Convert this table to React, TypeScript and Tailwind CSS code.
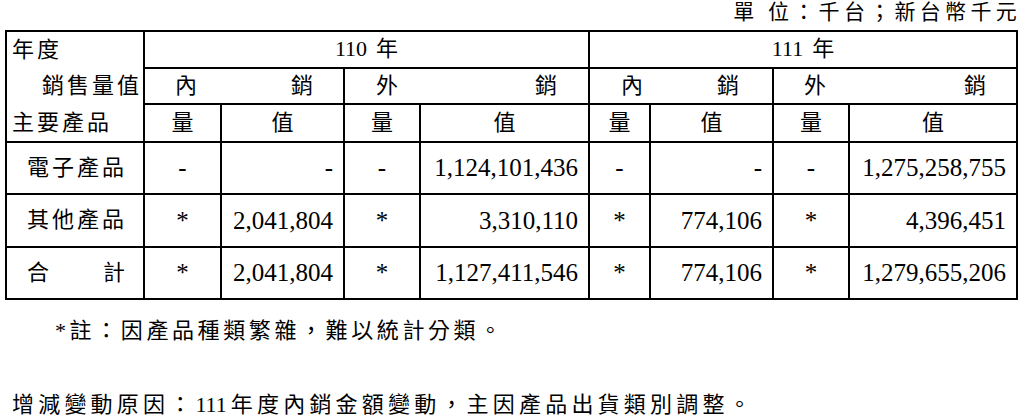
const serif = "font-['Liberation_Serif','Noto_Sans_CJK_TC',serif]";

const rows = [
  { name: "電子產品", v: ["-", "-", "-", "1,124,101,436", "-", "-", "-", "1,275,258,755"] },
  { name: "其他產品", v: ["*", "2,041,804", "*", "3,310,110", "*", "774,106", "*", "4,396,451"] },
  { name: "合計", v: ["*", "2,041,804", "*", "1,127,411,546", "*", "774,106", "*", "1,279,655,206"] },
];

const cell = "border-2 border-black p-0";

export default function App() {
  return (
    <div className={`w-[1024px] h-[420px] bg-white text-black flex flex-col ${serif}`}>
      <div className="h-[30px] flex items-center justify-end pr-[3px] pb-[4px] text-[21px] tracking-[4.3px] leading-none">
        單 位：千台；新台幣千元
      </div>

      <table className="ml-[5px] w-[1011px] table-fixed border-collapse border-2 border-black">
        <colgroup>
          <col className="w-[138px]" />
          <col className="w-[77px]" />
          <col className="w-[123px]" />
          <col className="w-[76px]" />
          <col className="w-[169px]" />
          <col className="w-[61px]" />
          <col className="w-[123px]" />
          <col className="w-[76px]" />
          <col className="w-[168px]" />
        </colgroup>
        <tbody className="text-[22px] leading-none">
          <tr className="h-[37px]">
            <td rowSpan={3} className={`${cell} align-top`}>
              <div className="flex flex-col tracking-[3px]">
                <div className="h-[36px] flex items-center pl-[5px]">年度</div>
                <div className="h-[37px] flex items-center justify-end pr-[1px]">銷售量值</div>
                <div className="h-[36px] flex items-center pl-[5px]">主要產品</div>
              </div>
            </td>
            <td colSpan={4} className={`${cell} text-center`}>
              110<span className="ml-[9px]">年</span>
            </td>
            <td colSpan={4} className={`${cell} text-center`}>
              111<span className="ml-[9px]">年</span>
            </td>
          </tr>
          <tr className="h-[36px]">
            <td colSpan={2} className={cell}>
              <div className="flex justify-between px-[30px]"><span>內</span><span>銷</span></div>
            </td>
            <td colSpan={2} className={cell}>
              <div className="flex justify-between px-[31px]"><span>外</span><span>銷</span></div>
            </td>
            <td colSpan={2} className={cell}>
              <div className="flex justify-between pl-[31px] pr-[33px]"><span>內</span><span>銷</span></div>
            </td>
            <td colSpan={2} className={cell}>
              <div className="flex justify-between px-[30px]"><span>外</span><span>銷</span></div>
            </td>
          </tr>
          <tr className="h-[37px]">
            {["量", "值", "量", "值", "量", "值", "量", "值"].map((t, i) => (
              <td key={i} className={`${cell} text-center`}>{t}</td>
            ))}
          </tr>
          {rows.map((r, ri) => (
            <tr key={r.name} className={ri === 1 ? "h-[53px]" : "h-[52px]"}>
              <td className={cell}>
                {r.name === "合計" ? (
                  <div className="w-[100px] mx-auto flex justify-between pl-[2px]">
                    <span>合</span>
                    <span>計</span>
                  </div>
                ) : (
                  <div className="text-center tracking-[3px] pl-[4px]">{r.name}</div>
                )}
              </td>
              {r.v.map((v, i) => (
                <td
                  key={i}
                  className={`${cell} text-[25px] ${i % 2 === 0 ? "text-center" : "text-right pr-[10px]"}`}
                >
                  {v}
                </td>
              ))}
            </tr>
          ))}
        </tbody>
      </table>

      <div className="mt-[16px] h-[30px] flex items-center pl-[55px] text-[22px] tracking-[3.6px] leading-none">
        *註：因產品種類繁雜，難以統計分類。
      </div>
      <div className="mt-[45px] h-[30px] flex items-center pl-[12px] text-[22px] tracking-[4.2px] leading-none">
        增減變動原因：<span className="tracking-normal mr-[4px]">111</span>年度內銷金額變動，主因產品出貨類別調整。
      </div>
    </div>
  );
}
